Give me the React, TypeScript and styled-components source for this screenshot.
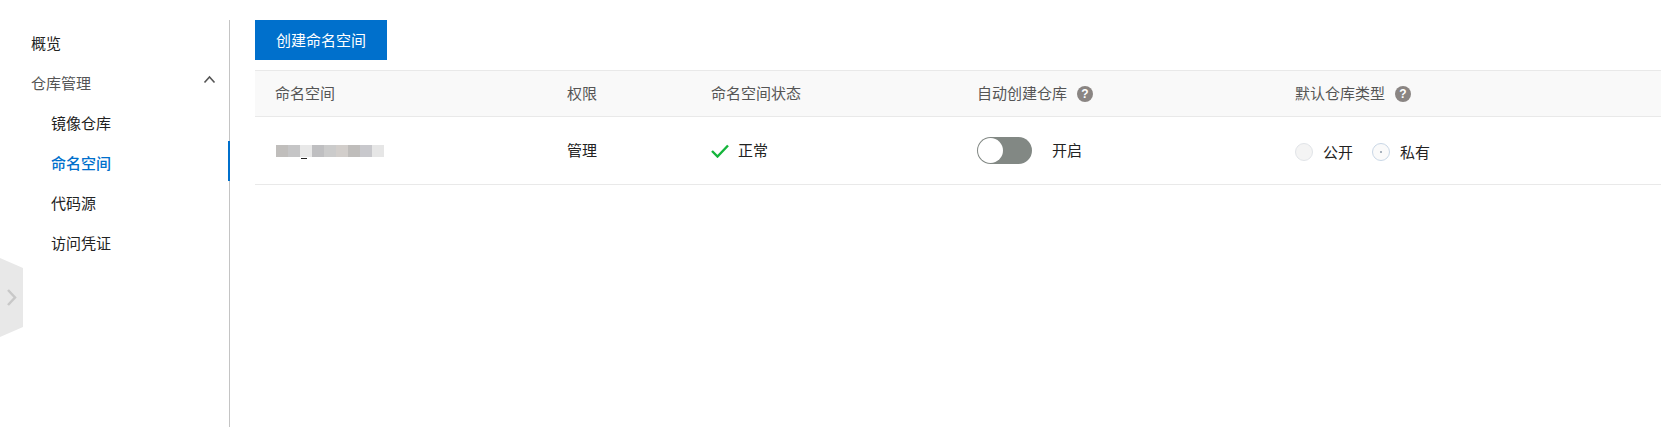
import * as React from 'react';
import styled, { createGlobalStyle } from 'styled-components';

const GlobalStyle = createGlobalStyle`
html, body {
    margin: 0;
    padding: 0;
    background: #fff;
}
body {
    font-family: "Noto Sans CJK SC", "Noto Sans", sans-serif;
    font-size: 15px;
    color: #222;
}
`;

const Page = styled.div`
display: flex;
width: 1661px;
height: 427px;
overflow: hidden;
position: relative;
`;

const Sidebar = styled.nav`
box-sizing: border-box;
flex: 0 0 230px;
height: 407px;
margin-top: 20px;
padding-top: 1px;
border-right: 1px solid #c4c4c4;
`;

const NavItem = styled.div<{ $sub?: boolean; $active?: boolean; $muted?: boolean }>`
box-sizing: border-box;
position: relative;
display: flex;
align-items: center;
justify-content: space-between;
height: 40px;
padding: 3px 14px 0 ${props => (props.$sub ? 51 : 31)}px;
margin-right: -1px;
color: ${props => (props.$active ? '#0070cc' : props.$muted ? '#555' : '#222')};
font-weight: ${props => (props.$active ? 500 : 400)};
${props => props.$active && 'border-right: 2px solid #0070cc;'}
`;

const Caret = styled.svg`
width: 13px;
height: 9px;
margin-top: -6px;
`;

const Main = styled.main`
flex: 0 0 1406px;
margin: 20px 0 0 25px;
`;

const CreateButton = styled.button`
display: block;
width: 132px;
height: 40px;
padding: 0 0 2px;
border: none;
background: #0070cc;
color: #fff;
font: inherit;
`;

const TableRow = styled.div<{ $head?: boolean }>`
box-sizing: border-box;
display: grid;
grid-template-columns: 292px 144px 266px 318px 1fr;
align-items: center;
height: ${props => (props.$head ? 47 : 68)}px;
margin-top: ${props => (props.$head ? 10 : 0)}px;
border-bottom: 1px solid #e9e9e9;
${props => props.$head && 'border-top: 1px solid #e9e9e9; background: #f9f9f9; color: #555;'}
`;

const Cell = styled.div<{ $gap?: number }>`
display: flex;
align-items: center;
gap: ${props => props.$gap ?? 0}px;
padding: 0 0 2px 20px;
`;

const Help = styled.span`
display: inline-flex;
align-items: center;
justify-content: center;
width: 16px;
height: 16px;
margin: 2px 0 0 1px;
border-radius: 50%;
background: #8a8583;
color: #fff;
font-family: "Liberation Sans", sans-serif;
font-size: 12px;
font-weight: 700;
line-height: 1;
`;

const Mosaic = styled.div`
position: relative;
display: flex;
margin: 2px 0 0 1px;
`;

const Tile = styled.span<{ $color: string }>`
width: 12px;
height: 12px;
background: ${props => props.$color};
`;

const Underscore = styled.span`
position: absolute;
left: 25px;
top: 13px;
width: 6px;
height: 1px;
background: #222;
`;

const Check = styled.svg`
width: 18px;
height: 14px;
margin-top: 2px;
`;

const Switch = styled.div`
box-sizing: border-box;
width: 55px;
height: 27px;
margin-top: 2px;
padding: 1px;
border-radius: 14px;
background: #828884;
`;

const Knob = styled.div`
width: 25px;
height: 25px;
border-radius: 50%;
background: #fff;
`;

const RadioGroup = styled.div`
display: flex;
align-items: center;
margin-top: 4px;
`;

const Radio = styled.span<{ $checked?: boolean }>`
box-sizing: border-box;
display: flex;
align-items: center;
justify-content: center;
width: 18px;
height: 18px;
margin-right: 10px;
border-radius: 50%;
border: 1px solid ${props => (props.$checked ? '#c9d7e6' : '#e1e4e8')};
background: ${props => (props.$checked ? '#fafafa' : '#f4f4f4')};
`;

const RadioDot = styled.span`
width: 2px;
height: 2px;
border-radius: 50%;
background: #8c9aa8;
`;

const RadioLabel = styled.span`
margin-right: 19px;
`;

const Collapse = styled.svg`
position: absolute;
left: 0;
top: 258px;
width: 23px;
height: 79px;
`;

const tiles = ['#c0bebc', '#c5c5c6', '#e8e8e8', '#bfbfc1', '#cbcbcb', '#d2cecb', '#bfbdbb', '#c8c8cc', '#e6e6e6'];

const App: React.FC = () => {
    return (<>
        <GlobalStyle />
        <Page>
            <Sidebar>
                <NavItem>概览</NavItem>
                <NavItem $muted>
                    仓库管理
                    <Caret viewBox="0 0 13 9" fill="none" stroke="#555" strokeWidth="1.6">
                        <path d="M1.5 7.5 6.5 2l5 5.5" />
                    </Caret>
                </NavItem>
                <NavItem $sub>镜像仓库</NavItem>
                <NavItem $sub $active>命名空间</NavItem>
                <NavItem $sub>代码源</NavItem>
                <NavItem $sub>访问凭证</NavItem>
            </Sidebar>
            <Main>
                <CreateButton>创建命名空间</CreateButton>
                <TableRow $head>
                    <Cell>命名空间</Cell>
                    <Cell>权限</Cell>
                    <Cell>命名空间状态</Cell>
                    <Cell $gap={9}>自动创建仓库<Help>?</Help></Cell>
                    <Cell $gap={9}>默认仓库类型<Help>?</Help></Cell>
                </TableRow>
                <TableRow>
                    <Cell>
                        <Mosaic>
                            {tiles.map((color, i) => <Tile key={i} $color={color} />)}
                            <Underscore />
                        </Mosaic>
                    </Cell>
                    <Cell>管理</Cell>
                    <Cell $gap={9}>
                        <Check viewBox="0 0 18 14" fill="none" stroke="#14b53b" strokeWidth="2.4">
                            <path d="M1 7l5.5 5.5L17 1.5" />
                        </Check>
                        正常
                    </Cell>
                    <Cell $gap={20}>
                        <Switch><Knob /></Switch>
                        <span>开启</span>
                    </Cell>
                    <Cell>
                        <RadioGroup>
                            <Radio />
                            <RadioLabel>公开</RadioLabel>
                            <Radio $checked><RadioDot /></Radio>
                            <span>私有</span>
                        </RadioGroup>
                    </Cell>
                </TableRow>
            </Main>
            <Collapse viewBox="0 0 23 79">
                <path d="M0 0l23 10v59L0 79z" fill="#e8e8e8" />
                <path d="M8 32l7 7.5L8 47" fill="none" stroke="#c8c8c8" strokeWidth="2.5" />
            </Collapse>
        </Page>
    </>);
};

export default App;
